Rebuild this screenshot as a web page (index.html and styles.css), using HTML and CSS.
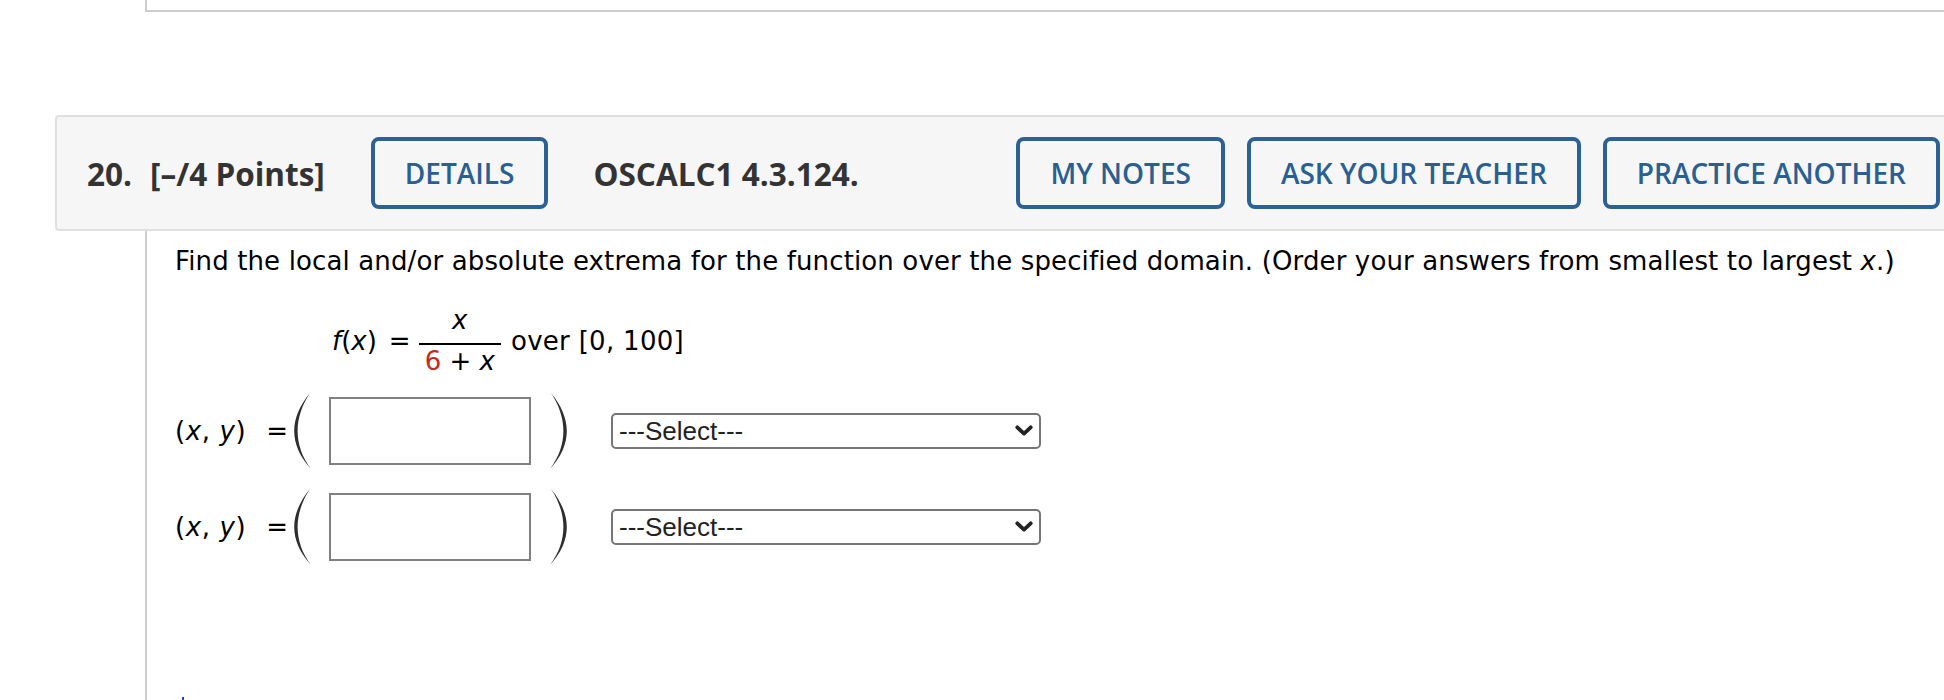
FILE: index.html
```html
<!DOCTYPE html>
<html lang="en">
<head>
<meta charset="utf-8">
<title>Question 20</title>
<link rel="stylesheet" href="styles.css">
</head>
<body>
<div class="page">
  <div class="prev"></div>
  <div class="question">
    <div class="qhead">
      <span class="qnum">20.</span>
      <span class="qpts">[&ndash;/4 Points]</span>
      <button class="btn btn-details">DETAILS</button>
      <span class="qref">OSCALC1 4.3.124.</span>
      <div class="actions">
        <button class="btn">MY NOTES</button>
        <button class="btn">ASK YOUR TEACHER</button>
        <button class="btn">PRACTICE ANOTHER</button>
      </div>
    </div>
    <div class="qbody">
      <p class="prompt">Find the local and/or absolute extrema for the function over the specified domain. (Order your answers from smallest to largest <i>x</i>.)</p>
      <div class="formula">
        <span class="fx"><i>f</i>(<i>x</i>)</span>
        <span class="eq">=</span>
        <span class="frac"><span class="num"><i>x</i></span><span class="den"><span class="red">6</span> + <i>x</i></span></span>
        <span class="over">over [0, 100]</span>
      </div>
      <div class="answer">
        <span class="lbl">(<i>x</i>, <i>y</i>)</span>
        <span class="eq2">=</span>
        <svg class="paren" width="20" height="78" viewBox="0 0 20 78"><path d="M17 1 C7 13 1.2 26 1.2 39 C1.2 52 7 65 18 77 C9 65 4.6 52 4.6 39 C4.6 26 9 13 17 1 Z" fill="#2e2e2e"/></svg>
        <input class="box" type="text">
        <svg class="paren paren-r" width="20" height="78" viewBox="0 0 20 78"><path d="M3 1 C13 13 18.8 26 18.8 39 C18.8 52 13 65 2 77 C11 65 15.4 52 15.4 39 C15.4 26 11 13 3 1 Z" fill="#2e2e2e"/></svg>
        <span class="sel">
          <select><option>---Select---</option></select>
          <svg class="chev" width="18" height="11" viewBox="0 0 18 11"><path d="M2.3 2.3 L9 8.6 L15.7 2.3" fill="none" stroke="#222" stroke-width="3.8" stroke-linecap="round" stroke-linejoin="round"/></svg>
        </span>
      </div>
      <div class="answer">
        <span class="lbl">(<i>x</i>, <i>y</i>)</span>
        <span class="eq2">=</span>
        <svg class="paren" width="20" height="78" viewBox="0 0 20 78"><path d="M17 1 C7 13 1.2 26 1.2 39 C1.2 52 7 65 18 77 C9 65 4.6 52 4.6 39 C4.6 26 9 13 17 1 Z" fill="#2e2e2e"/></svg>
        <input class="box" type="text">
        <svg class="paren paren-r" width="20" height="78" viewBox="0 0 20 78"><path d="M3 1 C13 13 18.8 26 18.8 39 C18.8 52 13 65 2 77 C11 65 15.4 52 15.4 39 C15.4 26 11 13 3 1 Z" fill="#2e2e2e"/></svg>
        <span class="sel">
          <select><option>---Select---</option></select>
          <svg class="chev" width="18" height="11" viewBox="0 0 18 11"><path d="M2.3 2.3 L9 8.6 L15.7 2.3" fill="none" stroke="#222" stroke-width="3.8" stroke-linecap="round" stroke-linejoin="round"/></svg>
        </span>
      </div>
      <span class="caret"></span>
    </div>
  </div>
</div>
</body>
</html>
```

FILE: styles.css
```css
html, body {
  margin: 0;
  padding: 0;
  background: #ffffff;
}

body {
  width: 1944px;
  height: 700px;
  overflow: hidden;
}

.page {
  width: 1944px;
}

.prev {
  margin-left: 145px;
  height: 10px;
  border-left: 2px solid #cccccc;
  border-bottom: 2px solid #cccccc;
}

.question {
  margin-top: 103px;
  margin-left: 55px;
  width: 1907px;
}

.qhead {
  box-sizing: border-box;
  display: flex;
  align-items: center;
  height: 116px;
  padding: 0 20px 0 30px;
  border: 2px solid #e0e0e0;
  border-radius: 4px;
  background: #f6f6f6;
  font-family: "Open Sans", "Liberation Sans", sans-serif;
  font-size: 31.5px;
  font-weight: 700;
  color: #333333;
}

.qnum {
  margin-right: 18px;
}

.qpts {
  margin-right: 46px;
}

.btn {
  box-sizing: border-box;
  height: 72px;
  padding: 0 30px;
  border: 4px solid #2c6195;
  border-radius: 8px;
  background: transparent;
  color: #2a5f91;
  font-family: "Open Sans", "Liberation Sans", sans-serif;
  font-size: 28px;
  font-weight: 600;
}

.btn-details {
  margin-right: 45px;
}

.actions {
  display: flex;
  gap: 22px;
  margin-left: auto;
}

.qbody {
  box-sizing: border-box;
  height: 469px;
  margin-left: 90px;
  padding: 12px 0 0 28px;
  border-left: 2px solid #cccccc;
  font-family: "DejaVu Sans", Verdana, sans-serif;
  font-size: 26px;
  color: #000000;
}

.prompt {
  margin: 0;
  line-height: 36px;
  letter-spacing: 0.13px;
}

.formula {
  display: flex;
  align-items: center;
  margin-top: 28px;
  padding-left: 157px;
  line-height: 26px;
}

.eq {
  margin: 0 8px 0 12px;
}

.frac {
  display: inline-flex;
  flex-direction: column;
  align-items: stretch;
  text-align: center;
}

.num {
  padding: 0 6px 10px;
  border-bottom: 2px solid #000000;
}

.den {
  padding: 3px 6px 0;
}

.red {
  color: #c42a1e;
}

.over {
  margin-left: 10px;
  letter-spacing: 0.3px;
}

.answer {
  display: flex;
  align-items: center;
  height: 78px;
  margin-top: 18px;
}

.lbl {
  letter-spacing: 0.6px;
}

.eq2 {
  margin-left: 20px;
}

.paren {
  display: block;
  margin-left: 5px;
}

.box {
  box-sizing: border-box;
  width: 202px;
  height: 68px;
  margin: 0 0 0 16px;
  border: 2px solid #808080;
  border-radius: 0;
  background: #ffffff;
}

.paren-r {
  margin-left: 17px;
}

.sel {
  position: relative;
  display: block;
  margin-left: 43px;
}

.sel select {
  display: block;
  box-sizing: border-box;
  width: 430px;
  height: 36px;
  padding: 0 0 0 6px;
  border: 2px solid #767676;
  border-radius: 5px;
  background: #ffffff;
  color: #222222;
  font-family: "Liberation Sans", Arial, sans-serif;
  font-size: 26px;
  -webkit-appearance: none;
  appearance: none;
}

.chev {
  position: absolute;
  right: 8px;
  top: 12px;
  pointer-events: none;
}

.caret {
  display: block;
  width: 2px;
  height: 3px;
  margin: 131px 0 0 7px;
  background: #2233ff;
}
```
